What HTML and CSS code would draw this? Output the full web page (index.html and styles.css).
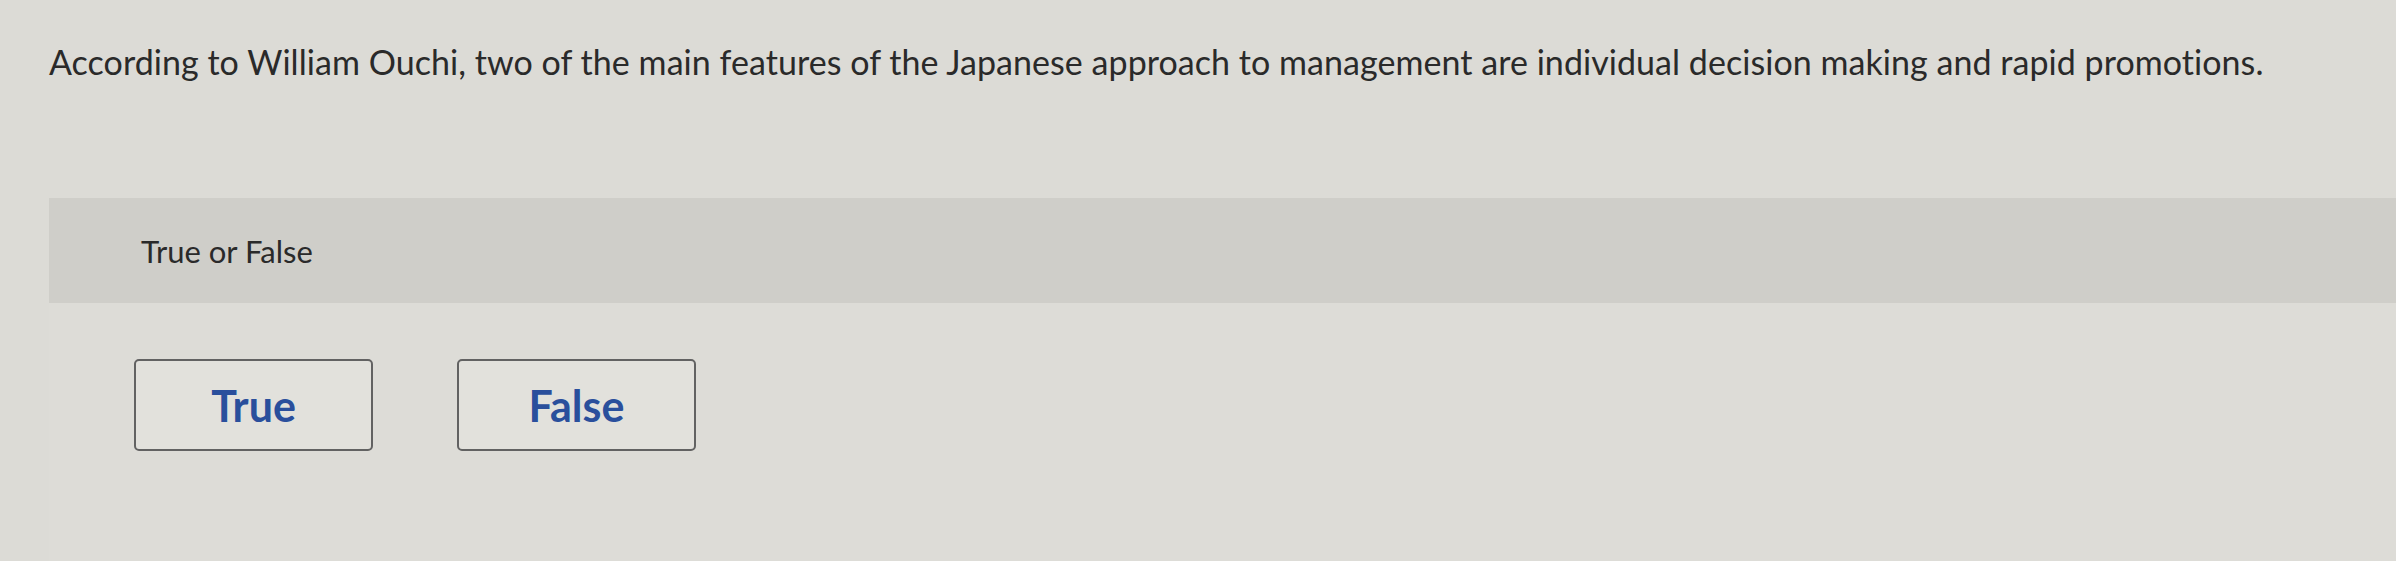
FILE: index.html
```html
<!DOCTYPE html>
<html lang="en">
<head>
	<meta charset="UTF-8">
	<title>Question</title>
	<link rel="stylesheet" href="styles.css">
</head>
<body>
	<div class="question">
		<p class="prompt">According to William Ouchi, two of the main features of the Japanese approach to management are individual decision making and rapid promotions.</p>
		<div class="answer-box">
			<div class="answer-head">True or False</div>
			<div class="answer-body">
				<button class="choice">True</button>
				<button class="choice">False</button>
			</div>
		</div>
	</div>
</body>
</html>
```

FILE: styles.css
```css
html, body { margin: 0; height: 100%; }
body { background: #dcdbd6; font-family: Lato, "Open Sans", sans-serif; color: #2a2a2a; overflow: hidden; }
.question { padding-left: 49px; }
.prompt { margin: 0; padding-top: 42px; height: 198px; box-sizing: border-box; font-size: 34px; line-height: 40px; letter-spacing: 0.05px; }
.answer-box { background: #dddcd7; height: 363px; }
.answer-head { background: #cfcec9; height: 105px; display: flex; align-items: center; padding-left: 92px; font-size: 31px; box-sizing: border-box; }
.answer-body { display: flex; gap: 84px; padding: 56px 0 0 85px; }
.choice { width: 239px; height: 92px; background: #e2e1dc; border: 2px solid #626262; border-radius: 5px; font-family: Lato, sans-serif; font-weight: bold; font-size: 43px; color: #2a4f9c; padding: 0; }
```
